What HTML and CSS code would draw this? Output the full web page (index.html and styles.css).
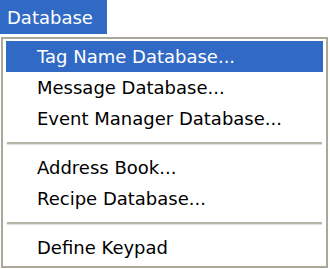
FILE: index.html
```html
<!DOCTYPE html>
<html>
<head>
<meta charset="utf-8">
<link rel="stylesheet" href="styles.css">
</head>
<body>
<div class="menubar">
  <div class="menubar-item">Database</div>
</div>
<div class="menu">
  <div class="item active">Tag Name Database...</div>
  <div class="item">Message Database...</div>
  <div class="item">Event Manager Database...</div>
  <div class="sep"></div>
  <div class="item">Address Book...</div>
  <div class="item">Recipe Database...</div>
  <div class="sep"></div>
  <div class="item">Define Keypad</div>
</div>
</body>
</html>
```
FILE: styles.css
```css
html, body {
  margin: 0;
  padding: 0;
  background: #ffffff;
}
body {
  font-family: "DejaVu Sans", "Liberation Sans", sans-serif;
  font-size: 18px;
  color: #000000;
  width: 330px;
  height: 269px;
  overflow: hidden;
}
.menubar {
  display: flex;
  height: 34px;
}
.menubar-item {
  width: 107px;
  height: 34px;
  background: #316ac5;
  color: #ffffff;
  display: flex;
  align-items: center;
  padding-left: 7px;
  box-sizing: border-box;
}
.menu {
  margin-top: 3px;
  margin-left: 1px;
  width: 327px;
  height: 231px;
  box-sizing: border-box;
  border: 2px solid #aca899;
  padding: 2px 3px 3px 3px;
  background: #ffffff;
  display: flex;
  flex-direction: column;
}
.item {
  height: 31px;
  display: flex;
  align-items: center;
  padding-left: 31px;
  white-space: nowrap;
}
.item.active {
  background: #316ac5;
  color: #ffffff;
}
.sep {
  height: 18px;
  display: flex;
  align-items: center;
  padding: 0 1px;
}
.sep::before {
  content: "";
  flex: 1;
  height: 2px;
  background: #b9b6aa;
  border-bottom: 1px solid #e2e0d8;
}
```
